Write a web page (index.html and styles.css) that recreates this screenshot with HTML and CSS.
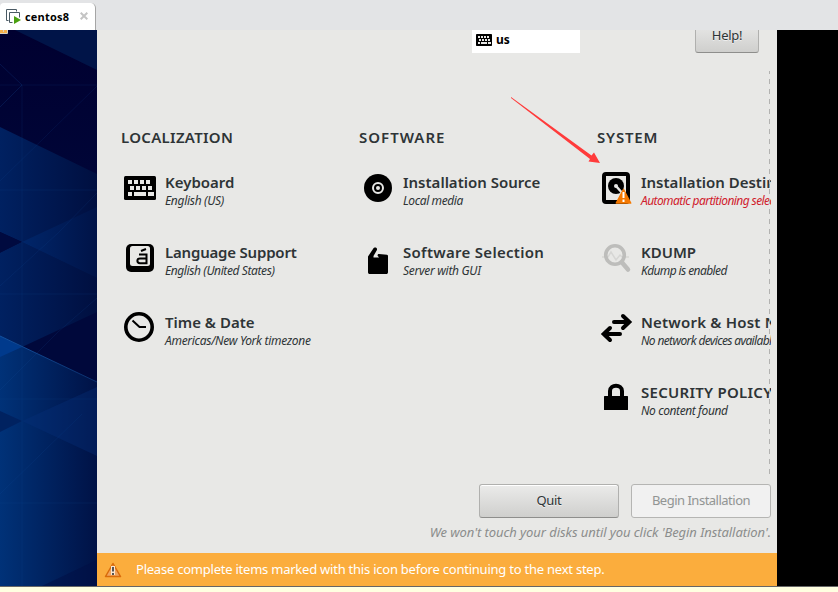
FILE: index.html
```html
<!doctype html>
<html lang="en">
<head>
<meta charset="utf-8">
<title>centos8</title>
<link rel="stylesheet" href="styles.css">
</head>
<body>
<header class="tabs">
  <div class="tab">
    <svg class="tab-icon" width="16" height="16" viewBox="0 0 16 16">
      <path d="M2.5 11.500H.5V.5h10v2" fill="none" stroke="#4a5a64"/>
      <path d="M6.500 13.500H3.500V3.500h10v5" fill="#fff" stroke="#4a5a64"/>
      <path d="M8 7v8l7-4z" fill="#4aa010"/>
    </svg>
    <span class="tab-name">centos8</span>
    <svg class="tab-close" width="8" height="8" viewBox="0 0 8 8"><path d="M.7.7l6.600 6.600M7.300.7L.7 7.300" stroke="#c4c4c4" stroke-width="2"/></svg>
  </div>
</header>
<main class="screen">
  <aside class="wallpaper">
    <svg width="97" height="556" viewBox="0 0 97 556">
      <defs>
        <linearGradient id="base" x1="0" y1="0" x2="0" y2="1">
          <stop offset="0" stop-color="#000030"/><stop offset=".5" stop-color="#000a3e"/><stop offset="1" stop-color="#00215f"/>
        </linearGradient>
        <linearGradient id="mid"><stop offset="0" stop-color="#002161"/><stop offset="1" stop-color="#000f40"/></linearGradient>
        <linearGradient id="low"><stop offset="0" stop-color="#003278"/><stop offset="1" stop-color="#001246"/></linearGradient>
        <linearGradient id="beam"><stop offset="0" stop-color="#00266a"/><stop offset="1" stop-color="#001347"/></linearGradient>
        <linearGradient id="edge" gradientUnits="userSpaceOnUse" x1="0" y1="0" x2="97" y2="0"><stop offset="0" stop-color="#12509e"/><stop offset="1" stop-color="#0b2f6c"/></linearGradient>
      </defs>
      <rect width="97" height="556" fill="url(#base)"/>
      <path d="M15 0h82v40z" fill="#001448"/>
      <path d="M0 97l97 47v108l-75 65-22 10V223l22-11-22-10z" fill="url(#mid)"/>
      <path d="M0 202l22 10-22 11z" fill="#000a3f"/>
      <path d="M22 212l75-35v71z" fill="url(#beam)"/>
      <path d="M22 317l75-66v101z" fill="#00083b"/>
      <path d="M0 223l22-11 75 36v34l-75 35-22-11z" fill="url(#mid)"/>
      <path d="M0 306l97 46v204H0z" fill="url(#low)"/>
      <path d="M0 306l22 11-22 10z" fill="#003a8c"/>
      <path d="M0 381l22 10-22 11z" fill="#002260"/>
      <path d="M22 391l75-34v69z" fill="#05307a" opacity=".35"/>
      <path d="M42 556l55-26v26z" fill="#000e44" opacity=".5"/>
      <path d="M0 306l97 46" stroke="url(#edge)" fill="none"/>
      <path d="M22 55v501M0 55h97M0 160h97M0 264h97M0 369h97M0 473h97M0 151L97 56M0 256l58-53 39-40M0 360l58-58 39-34M0 464l82-80" stroke="#1758a5" stroke-opacity=".14" fill="none"/>
      <path d="M0 34l22 21L0 77" stroke="#1758a5" stroke-opacity=".22" fill="none"/>
      <path d="M0 0h7v3H0z" fill="#f5b04a"/>
      <path d="M0 3.500h7.500V0M3.500 0v2" stroke="#d9d3c0" fill="none"/>
    </svg>
  </aside>
  <section class="installer">
    <div class="topbar">
      <div class="layout">
        <svg width="16" height="12" viewBox="0 0 32 24"><use href="#kbd"/></svg>
        <b>us</b>
      </div>
      <button class="btn help">Help!</button>
    </div>
    <div class="hub">
      <div class="col">
        <h2 class="loc">LOCALIZATION</h2>
        <div class="spoke">
          <svg width="36" height="36" viewBox="-2 -6 36 36">
            <g id="kbd">
              <rect width="32" height="24" rx="1.500" fill="#000"/>
              <path d="M4 4h4v4H4zM10 4h4v4h-4zM16 4h4v4h-4zM22 4h4v4h-4zM6 10h4v4H6zM12 10h4v4h-4zM18 10h4v4h-4zM24 10h4v4h-4zM4 16h4v4H4zM10 16h12v4H10zM24 16h6v4h-6z" fill="#e8e8e6"/>
            </g>
          </svg>
          <div><h3>Keyboard</h3><p class="s-kbd">English (US)</p></div>
        </div>
        <div class="spoke">
          <svg width="36" height="36" viewBox="0 0 36 36">
            <rect x="4" y="4" width="28" height="28" rx="5"/>
            <rect x="8" y="6" width="20" height="20" rx="2.500" fill="#e8e8e6"/>
            <path d="M17 14.500h7.500v8.700H18c-3.500 0-3.500-4.700 0-4.700h6.500M19 11l5-2" fill="none" stroke="#000" stroke-width="2"/>
          </svg>
          <div><h3 class="t-lang">Language Support</h3><p class="s-lang">English (United States)</p></div>
        </div>
        <div class="spoke">
          <svg width="36" height="36" viewBox="0 0 36 36">
            <circle cx="17" cy="17" r="13.200" fill="none" stroke="#000" stroke-width="3.600"/>
            <path d="M10.500 10.500l7 6.500H24" fill="none" stroke="#000" stroke-width="2"/>
          </svg>
          <div><h3>Time &amp; Date</h3><p class="s-time">Americas/New York timezone</p></div>
        </div>
      </div>
      <div class="col">
        <h2 class="soft">SOFTWARE</h2>
        <div class="spoke">
          <svg width="36" height="36" viewBox="0 0 36 36">
            <circle cx="18" cy="18" r="14"/>
            <circle cx="18" cy="18" r="5" fill="none" stroke="#e8e8e6" stroke-width="2"/>
            <circle cx="18" cy="18" r="2" fill="#e8e8e6"/>
          </svg>
          <div><h3>Installation Source</h3><p class="s-src">Local media</p></div>
        </div>
        <div class="spoke">
          <svg width="36" height="36" viewBox="0 0 36 36">
            <path d="M8 16.500l5-7.500c1.500-2.500 5-1.300 3.800 1.200L13.500 16v1.500h5.500L17.500 15.500c0-1.200.6-1.700 1.500-1.600l8 .9c.7.100 1 .6 1 1.300V32c0 1.400-.6 2-2 2H10c-1.400 0-2-.6-2-2z"/>
          </svg>
          <div><h3 class="t-sel">Software Selection</h3><p class="s-sel">Server with GUI</p></div>
        </div>
      </div>
      <div class="col">
        <h2 class="sys">SYSTEM</h2>
        <div class="spoke">
          <svg width="36" height="36" viewBox="0 0 36 36">
            <rect x="6" y="4" width="24" height="28" rx="2" fill="none" stroke="#000" stroke-width="4"/>
            <circle cx="18" cy="16" r="8"/>
            <path d="M18 16l8 9" stroke="#e8e8e6" stroke-width="2.500"/>
            <circle cx="18" cy="16" r="2" fill="#e8e8e6"/>
            <path d="M25.500 19.500L32.700 33H18.300z" fill="#f57900" stroke="#f57900" stroke-width="1.500" stroke-linejoin="round"/>
            <path d="M25.500 22v6M25.500 29.500V32" stroke="#fff" stroke-width="2"/>
          </svg>
          <div><h3>Installation Destination</h3><p class="s-dest">Automatic partitioning selected</p></div>
        </div>
        <div class="spoke">
          <svg width="36" height="36" viewBox="0 0 36 36" fill="none" stroke="#bdbdbb">
            <path d="M4 17h6l3-5 5 8 4-5 2 2h7" stroke="#d6d6d4" stroke-width="1.500"/>
            <circle cx="17" cy="15" r="9.300" stroke-width="3.600"/>
            <path d="M24 22.500l6 7" stroke-width="4.500" stroke-linecap="round"/>
          </svg>
          <div><h3>KDUMP</h3><p class="s-kdump">Kdump is enabled</p></div>
        </div>
        <div class="spoke">
          <svg width="36" height="36" viewBox="0 0 36 36" fill="none" stroke="#000" stroke-width="4" stroke-linecap="round">
            <path d="M16 12h15M25 6l6.300 6-6.300 6M22 24H8M12 18l-6.300 6 6.300 6"/>
          </svg>
          <div><h3 class="t-net">Network &amp; Host Name</h3><p class="s-net">No network devices available</p></div>
        </div>
        <div class="spoke">
          <svg width="36" height="36" viewBox="0 0 36 36">
            <path d="M12 17v-6c0-7 12-7 12 0v6" fill="none" stroke="#000" stroke-width="4"/>
            <rect x="6" y="16" width="24" height="14" rx=".5"/>
          </svg>
          <div><h3 class="t-sec">SECURITY POLICY</h3><p class="s-sec">No content found</p></div>
        </div>
      </div>
    </div>
    <div class="actions">
      <button class="btn quit">Quit</button>
      <button class="btn begin" disabled>Begin Installation</button>
    </div>
    <p class="hint">We won't touch your disks until you click 'Begin Installation'.</p>
    <div class="infobar">
      <svg width="18" height="16" viewBox="0 0 18 16">
        <path d="M9 1.500L16.500 14.500h-15z" fill="#f0a45e" stroke="#d96b0b" stroke-width="1.500" stroke-linejoin="round"/>
        <path d="M9 4v9" stroke="#fae5cf" stroke-width="4"/>
        <path d="M9 5v4.500M9 11v2" stroke="#444" stroke-width="1.800"/>
      </svg>
      <span>Please complete items marked with this icon before continuing to the next step.</span>
    </div>
    <svg class="pointer" width="92" height="68" viewBox="0 0 92 68"><path d="M3 0l80.500 58.500 2.500-3 6 10.500-11.500-1.500 1.500-2.500L3 1z" fill="#ff3b3b"/></svg>
  </section>
</main>
</body>
</html>
```
FILE: styles.css
```css
*{box-sizing:border-box;margin:0;padding:0}
body{
  width:838px;height:592px;overflow:hidden;
  background:#ffffe1;color:#2e3436;
  font-family:"Noto Sans","Open Sans",sans-serif;
}
.tabs{height:30px;padding-top:3px;background:#e3e4e6}
.tab{
  display:flex;align-items:center;
  width:96px;height:27px;padding-left:6px;
  background:#fff;border-right:1px solid #a5a5a5;border-radius:4px 5px 0 0;
}
.tab-name{width:55px;margin-left:3px;font:bold 11px "Open Sans",sans-serif;color:#000;letter-spacing:.2px}
.tab-close{margin-top:-1px}
.screen{display:flex;height:557px;overflow:hidden;background:#000;border-bottom:1px solid #666}
.wallpaper{width:97px}
.wallpaper svg{display:block}
.installer{
  position:relative;
  display:flex;flex-direction:column;
  width:680px;background:#e8e8e6;
}
.topbar{display:flex;height:23px;padding-left:375px}
.layout{
  display:flex;align-items:center;gap:4px;
  width:108px;height:23px;padding:0 0 3px 4px;
  background:#fff;color:#000;font-size:12px;
}
.layout b{margin-top:-2px}
.btn{
  width:140px;height:34px;padding-bottom:2px;
  border:1px solid #b0b0ae;border-bottom-color:#8e8e8c;border-radius:3px;
  background:linear-gradient(#ebebea,#cfcfcd);box-shadow:inset 0 1px #fff;
  font:13px "Noto Sans",sans-serif;color:#2e3436;text-shadow:0 1px #eee;
}
.help{width:64px;margin:-11px 0 0 115px;letter-spacing:-.3px}
.quit{letter-spacing:-.3px}
.begin{
  background:#f1f1f1;border-color:#b5b5b3;color:#929594;
  box-shadow:none;letter-spacing:-.5px;
}
.hub{
  position:relative;
  display:grid;grid-template-columns:238px 238px 174px;
  height:404px;margin:18px 6px 0 24px;overflow:hidden;
}
/* scroll undershoot marker */
.hub::after{
  content:"";position:absolute;top:0;right:1px;width:1px;height:404px;
  background:repeating-linear-gradient(#b2b2b0 0 3px,transparent 3px 8px,#b2b2b0 8px 10px);
}
.col{padding-top:55px;white-space:nowrap}
h2{height:44px;font-size:15px;line-height:22px;font-weight:600}
.loc{letter-spacing:.3px}
.soft{letter-spacing:1px}
.sys{letter-spacing:.8px}
h2{font-size:15px}
.spoke{display:flex;gap:7px;height:70px;padding-left:1px}
.spoke svg{flex:none}
h3{font-size:15px;line-height:20px;font-weight:600;margin-top:2px}
.t-lang{letter-spacing:-.2px}
.t-sel{letter-spacing:.28px}
.t-net{letter-spacing:.2px}
.t-sec{letter-spacing:.27px}
.spoke p{font-size:12px;line-height:18px;font-style:italic;letter-spacing:-.4px}
.spoke .s-kbd,.spoke .s-time,.spoke .s-sel{letter-spacing:-.3px}
.spoke .s-kdump{letter-spacing:-.6px}
.spoke .s-net{letter-spacing:-.65px}
.spoke .s-dest{letter-spacing:-.58px;color:#d0202c}
.actions{display:flex;justify-content:flex-end;gap:12px;margin:9px 6px 0 0}
.hint{
  margin:4px 6px 0 0;text-align:right;
  font-size:13px;line-height:20px;font-style:italic;color:#8b8d8c;letter-spacing:-.07px;
}
.infobar{
  display:flex;align-items:center;gap:14px;
  height:33px;margin-top:auto;padding-left:7px;
  background:#fbad3d;color:#fff;font-size:13px;letter-spacing:-.23px;
}
.infobar span{margin-top:-2px}
.pointer{position:absolute;left:411px;top:67px}
```
